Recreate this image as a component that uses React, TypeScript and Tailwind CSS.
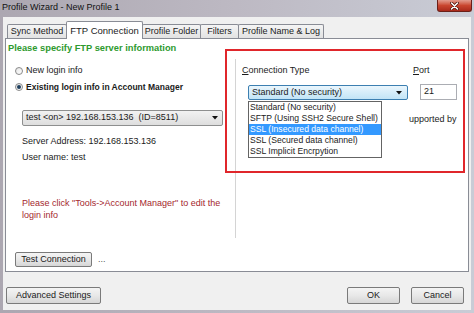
import React from 'react';

const Arrow: React.FC = () => (
  <svg width="6" height="4" viewBox="0 0 6 4" className="shrink-0">
    <polygon points="0,0 6,0 3,3.5" fill="#111" />
  </svg>
);

const Radio: React.FC<{ checked?: boolean }> = ({ checked }) => (
  <span className="w-[8px] h-[8px] rounded-full border border-[#8a8a8a] bg-gradient-to-br from-[#e6e6e6] to-[#ffffff] flex items-center justify-center shrink-0">
    {checked && <span className="w-[4px] h-[4px] rounded-full bg-[#1e3f5e]" />}
  </span>
);

const Btn: React.FC<{ label: string; className?: string }> = ({ label, className }) => (
  <div
    className={
      'flex items-center justify-center rounded-[2px] border border-[#7a7a7a] bg-gradient-to-b from-[#f4f4f4] via-[#e8e8e8] to-[#d6d6d6] text-[#1a1a1a] ' +
      (className || '')
    }
  >
    {label}
  </div>
);

const tabs = [
  { label: 'Sync Method', w: 'w-[60px]' },
  { label: 'FTP Connection', w: 'w-[77px]', active: true },
  { label: 'Profile Folder', w: 'w-[59px]' },
  { label: 'Filters', w: 'w-[39px]' },
  { label: 'Profile Name & Log', w: 'w-[86px]' },
];

const options = [
  'Standard (No security)',
  'SFTP (Using SSH2 Secure Shell)',
  'SSL (Insecured data channel)',
  'SSL (Secured data channel)',
  'SSL Implicit Encrpytion',
];

const App: React.FC = () => {
  return (
    <div className="w-[474px] h-[313px] flex flex-col bg-gradient-to-r from-[#aca7b1] via-[#bdb9c3] to-[#c9ccd6] font-['Liberation_Sans',Arial,sans-serif] text-[9px] text-[#1b1b1b] overflow-hidden">
      {/* Title bar */}
      <div className="h-[17px] flex items-start shrink-0">
        <span className="pl-[2px] pt-[1px] leading-[12px] text-[#111]">Profile Wizard - New Profile 1</span>
        <div className="ml-auto mr-[2px] w-[35px] h-[12px] rounded-b-[3px] border border-t-0 border-[#6b1f18] bg-gradient-to-b from-[#e29b8e] via-[#c9452f] to-[#a9291b] flex items-center justify-center">
          <svg width="9" height="8" viewBox="0 0 9 8">
            <path d="M1.5 1 L7.5 7 M7.5 1 L1.5 7" stroke="#4a0f08" strokeWidth="3" strokeLinecap="round" />
            <path d="M1.5 1 L7.5 7 M7.5 1 L1.5 7" stroke="#ffffff" strokeWidth="1.6" strokeLinecap="round" />
          </svg>
        </div>
      </div>

      {/* Window body */}
      <div className="mx-[3px] flex-1 bg-[#f0f0f0] flex flex-col">
        {/* Tabs */}
        <div className="h-[21px] flex items-end pl-[4px] shrink-0">
          {tabs.map((t) =>
            t.active ? (
              <div
                key={t.label}
                className={`${t.w} h-[18px] -mb-px -ml-px relative z-10 bg-white border border-b-0 border-[#898c95] rounded-t-[2px] flex items-center justify-center leading-none text-[9.5px]`}
              >
                {t.label}
              </div>
            ) : (
              <div
                key={t.label}
                className={`${t.w} h-[14px] -ml-px first:ml-0 bg-gradient-to-b from-[#f5f5f5] to-[#e2e2e2] border border-b-0 border-[#898c95] rounded-t-[2px] flex items-center justify-center leading-none`}
              >
                {t.label}
              </div>
            )
          )}
        </div>

        {/* Tab panel */}
        <div className="relative mx-[2px] h-[234px] bg-white border border-[#898c95] flex flex-col shrink-0">
          <div className="pl-[2px] pt-[2px] leading-[14px] text-[9.3px] font-bold text-[#2e9a2e]">
            Please specify FTP server information
          </div>

          <div className="mt-[4px] flex h-[179px]">
            {/* Left column */}
            <div className="w-[229px] flex flex-col">
              <div className="mt-[6px] pl-[9px] h-[12px] flex items-center gap-[3px]">
                <Radio />
                <span>New login info</span>
              </div>
              <div className="mt-[4px] pl-[9px] h-[12px] flex items-center gap-[3px]">
                <Radio checked />
                <span className="font-bold text-[8.5px]">Existing login info in Account Manager</span>
              </div>
              <div className="mt-[17px] ml-[16px] w-[201px] h-[16px] border border-[#8e8f8f] rounded-[2px] bg-gradient-to-b from-[#f2f2f2] to-[#dedede] flex items-center pl-[3px] pr-[4px]">
                <span className="flex-1 whitespace-pre">test &lt;on&gt; 192.168.153.136  (ID=8511)</span>
                <Arrow />
              </div>
              <div className="mt-[9px] pl-[16px] leading-[12px]">Server Address: 192.168.153.136</div>
              <div className="mt-[4px] pl-[16px] leading-[12px]">User name: test</div>
              <div className="mt-[34px] pl-[16px] leading-[12px] text-[#a4282e]">
                Please click "Tools-&gt;Account Manager" to edit the
                <br />
                login info
              </div>
            </div>

            {/* Right column */}
            <div className="flex-1 border-l border-[#d4d4d4] flex flex-col">
              <div className="mt-[6px] h-[12px] flex items-center pl-[6px]">
                <span className="w-[171px]">
                  <span className="underline">C</span>onnection Type
                </span>
                <span>
                  <span className="underline">P</span>ort
                </span>
              </div>
              <div className="mt-[7px] flex items-start pl-[12px] gap-[12px]">
                <div className="relative mt-[1px] w-[160px] h-[15px] border border-[#3c7fb1] rounded-[2px] bg-gradient-to-b from-[#eaf6fd] to-[#c2e4f6] flex items-center pl-[3px] pr-[5px]">
                  <span className="flex-1">Standard (No security)</span>
                  <Arrow />
                  <div className="absolute left-[-1px] top-full mt-[2px] w-[134px] bg-white border border-[#646464] z-20 text-[8.6px]">
                    {options.map((o, i) => (
                      <div
                        key={o}
                        className={
                          'h-[11px] leading-[11px] pl-[1px] whitespace-nowrap ' +
                          (i === 2 ? 'bg-[#3399ff] text-white' : '')
                        }
                      >
                        {o}
                      </div>
                    ))}
                  </div>
                </div>
                <div className="w-[37px] h-[16px] border border-[#abadb3] bg-white flex items-center pl-[3px]">21</div>
              </div>
              <div className="mt-[13px] pl-[173px] leading-[12px] whitespace-nowrap">upported by</div>
            </div>
          </div>

          <div className="mt-[14px] pl-[9px] flex items-center gap-[6px]">
            <Btn label="Test Connection" className="w-[77px] h-[15px]" />
            <span className="text-[#555]">...</span>
          </div>

          {/* annotation */}
          <div className="absolute left-[219px] top-[10px] w-[240px] h-[124px] border-2 border-[#e0262b] pointer-events-none" />
        </div>

        {/* Bottom buttons */}
        <div className="mt-[15px] flex items-center pl-[3px] pr-[7px]">
          <Btn label="Advanced Settings" className="w-[95px] h-[17px]" />
          <Btn label="OK" className="ml-auto w-[53px] h-[17px]" />
          <Btn label="Cancel" className="ml-[11px] w-[53px] h-[17px]" />
        </div>
      </div>
      <div className="h-[3px] shrink-0" />
    </div>
  );
};

export default App;
